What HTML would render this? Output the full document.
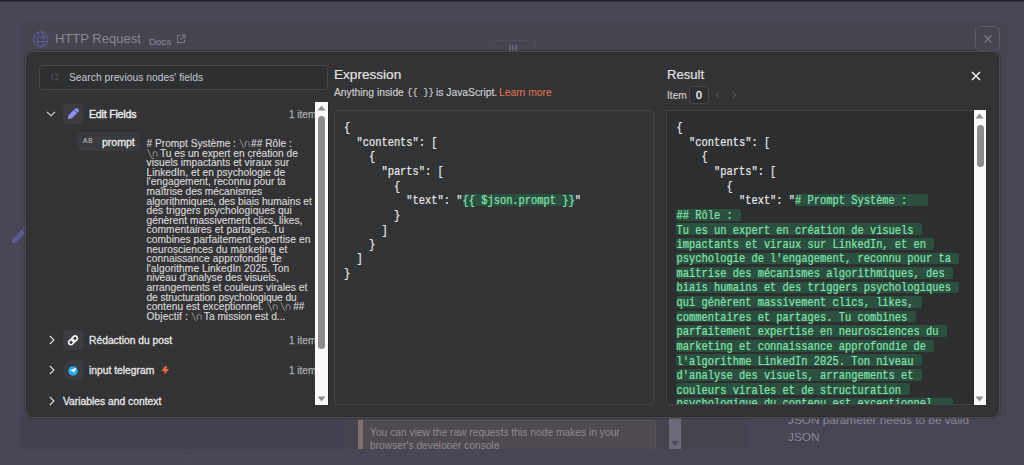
<!DOCTYPE html>
<html><head><meta charset="utf-8"><style>
*{box-sizing:border-box;margin:0;padding:0}
html,body{width:1024px;height:465px;overflow:hidden}
body{background:#484655;font-family:"Liberation Sans",sans-serif;position:relative}
.a{position:absolute;white-space:pre}
.mono{font-family:"Liberation Mono",monospace}
.t{color:#e8e8e8;-webkit-text-stroke:0.3px #e8e8e8}
.sub{color:#d0d0d0;-webkit-text-stroke:0.15px #d0d0d0}
.ed{border:1px solid #414245;border-radius:4px}
.code{font-family:"Liberation Mono",monospace;font-size:10.4px;line-height:12.652px;color:#e8e8e8;-webkit-text-stroke:0.2px #e8e8e8;transform:scaleY(1.15);transform-origin:0 0}
.hl{color:#82e2ac;-webkit-text-stroke:0.2px #82e2ac}
.icobox{width:20px;height:20px;border-radius:4px;background:#3b3c3f}
.item1{color:#ababab;font-size:10px;-webkit-text-stroke:0.25px #ababab}
.lt{font-size:10.2px;line-height:12px;color:#d8d8d8;-webkit-text-stroke:0.15px #d8d8d8}
.nl{font-family:"Liberation Mono",monospace;font-size:8.5px;line-height:12px;color:#8c8c8c;letter-spacing:-1.2px}
</style></head><body>
<div class="a" style="left:0;top:0;width:1024px;height:2px;background:linear-gradient(#1f1e25,#37353f)"></div>
<div class="a" style="left:20px;top:20px;width:986px;height:430px;border-radius:9px 9px 0 0;background:#45444f"></div>
<div class="a" style="left:748px;top:416px;width:258px;height:34px;background:#474553"></div>
<svg class="a" style="left:32px;top:30.5px" width="17" height="17" viewBox="0 0 17 17" fill="none" stroke="#5c5a8e" stroke-width="1.1">
 <circle cx="8.5" cy="8.4" r="7.5"/><ellipse cx="8.5" cy="8.4" rx="2.9" ry="7.5"/><line x1="1.2" y1="6.1" x2="15.8" y2="6.1"/><line x1="1.2" y1="10.6" x2="15.8" y2="10.6"/></svg>
<div class="a" style="left:55px;top:31px;font-size:13px;color:#8a8794">HTTP Request</div>
<div class="a" style="left:149px;top:35.5px;font-size:9.7px;letter-spacing:0.1px;color:#7d7a88;-webkit-text-stroke:0.3px #7d7a88">Docs</div>
<svg class="a" style="left:176px;top:34px" width="10" height="10" viewBox="0 0 10 10" fill="none" stroke="#7d7a88" stroke-width="1.1">
 <path d="M4.5 1.5H1.5V8.5H8.5V5.5"/><path d="M5.5 1H9V4.5"/><path d="M9 1L4.5 5.5"/></svg>
<div class="a" style="left:975px;top:26px;width:25px;height:25px;border:1px solid #5e5b6a;border-radius:5px"></div>
<svg class="a" style="left:983.5px;top:35px" width="8" height="8" viewBox="0 0 8 8" stroke="#7f7c89" stroke-width="1.1"><path d="M0.5 0.5L7.5 7.5M7.5 0.5L0.5 7.5"/></svg>
<div class="a" style="left:490px;top:40px;width:46px;height:13px;border:1px solid #4d4b59;border-radius:3px 3px 0 0"></div>
<div class="a" style="left:509px;top:45px;width:2px;height:7px;background:#646175"></div>
<div class="a" style="left:512px;top:45px;width:2px;height:7px;background:#646175"></div>
<div class="a" style="left:515px;top:45px;width:2px;height:7px;background:#646175"></div>
<div class="a" style="left:4px;top:219.5px;width:34px;height:30px;border:1px solid #4b4957;border-radius:4px"></div>
<svg class="a" style="left:8px;top:223px" width="22" height="24" viewBox="0 0 22 24"><path d="M3.8 19.9L4.3 15.9L14.6 5.6L18.4 9.4L8 19.8Z" fill="#5b5990"/><path d="M14.6 5.6L16.6 3.6L20.4 7.4L18.4 9.4Z" fill="#5b5990"/><path d="M14.2 6L18 9.8" stroke="#3b3a50" stroke-width="1"/></svg>
<div class="a" style="left:20px;top:416px;width:325px;height:33px;background:#43414d;border-radius:0 0 0 8px"></div>
<div class="a" style="left:345px;top:416px;width:403px;height:33px;background:#46434f"></div>
<div class="a" style="left:358px;top:420px;width:298px;height:33px;background:#4f4950;border:1px solid #5b5560;border-radius:2px"></div>
<div class="a" style="left:358px;top:420px;width:5px;height:30px;background:#7f706d"></div>
<div class="a" style="left:370px;top:427px;font-size:10.25px;line-height:12.5px;color:#8e8991">You can view the raw requests this node makes in your
browser's developer console</div>
<div class="a" style="left:669px;top:418px;width:12px;height:32px;background:#6d6a77"></div>
<svg class="a" style="left:670px;top:440px" width="10" height="7"><path d="M1 1H9L5 6Z" fill="#4d4a57"/></svg>
<div class="a" style="left:0;top:449px;width:1024px;height:16px;background:#484655"></div>
<div class="a" style="left:788px;top:411.5px;font-size:11.8px;line-height:17px;color:#8b8895">JSON parameter needs to be valid
JSON</div>
<div class="a" style="left:172px;top:450px;font-size:11px;font-weight:700;color:#4c4a59">Logs</div>
<div class="a" style="left:24px;top:50px;width:977px;height:369px;border-radius:9px;background:rgba(40,38,48,0.35)"></div>
<div class="a" style="left:25px;top:51px;width:975px;height:367px;border-radius:9px;background:#333335;border:1px solid #4b4b50;box-shadow:inset 0 0 0 1px #2c2d2f"></div>
<div class="a" style="left:39px;top:65px;width:289px;height:25px;border:1px solid #46474a;border-radius:4px;background:#2e2f31"></div>
<svg class="a" style="left:51px;top:73px" width="9" height="9" viewBox="0 0 9 9" fill="none" stroke="#505155" stroke-width="1"><circle cx="3.8" cy="3.8" r="3.1"/><path d="M6.1 6.1L8.4 8.4"/></svg>
<div class="a" style="left:69px;top:72px;font-size:10.3px;color:#c6c8d2">Search previous nodes' fields</div>
<svg class="a" style="left:46px;top:111px" width="10" height="6" viewBox="0 0 10 6" fill="none" stroke="#e2e2e2" stroke-width="1.1"><path d="M1 0.8L5 4.8L9 0.8"/></svg>
<div class="a icobox" style="left:63px;top:104px"></div>
<svg class="a" style="left:63px;top:104px" width="20" height="20" viewBox="0 0 20 20"><path d="M4.9 15.1L5.4 11.5L12.3 4.6A1.5 1.5 0 0 1 14.4 4.6L15.4 5.6A1.5 1.5 0 0 1 15.4 7.7L8.5 14.6Z" fill="#9090f7"/><path d="M11.2 5.9L14.1 8.8" stroke="#2c2c3c" stroke-width="0.8"/></svg>
<div class="a" style="left:89px;top:108px;font-size:10.6px;letter-spacing:-0.2px;color:#ececec;-webkit-text-stroke:0.38px #ececec">Edit Fields</div>
<div class="a item1" style="left:289px;top:109px">1 item</div>
<div class="a" style="left:78px;top:132px;width:62px;height:19px;border-radius:4px;background:#3a3b3e"></div>
<div class="a" style="left:83px;top:137px;font-size:6.5px;letter-spacing:0.8px;color:#b0b0b0;-webkit-text-stroke:0.2px #b0b0b0">AB</div>
<div class="a" style="left:102px;top:136px;font-size:10.6px;letter-spacing:-0.05px;color:#ececec;-webkit-text-stroke:0.3px #ececec">prompt</div>
<div class="a lt" style="left:146.5px;top:137.50px;"># Prompt Système :</div>
<svg class="a" style="left:239.2px;top:139.30px" width="11" height="10" viewBox="0 0 11 10" fill="none" stroke="#8e8e8e" stroke-width="1"><path d="M0.8 0.3L4.9 9.2"/><path d="M6.3 2.6V7.6M6.3 4.2Q6.7 2.6 8.3 2.6Q10.1 2.6 10.1 4.4V7.6"/></svg>
<div class="a lt" style="left:251.0px;top:137.50px;">## Rôle :</div>
<svg class="a" style="left:147.2px;top:149.30px" width="11" height="10" viewBox="0 0 11 10" fill="none" stroke="#8e8e8e" stroke-width="1"><path d="M0.8 0.3L4.9 9.2"/><path d="M6.3 2.6V7.6M6.3 4.2Q6.7 2.6 8.3 2.6Q10.1 2.6 10.1 4.4V7.6"/></svg>
<div class="a lt" style="left:160.0px;top:147.50px;">Tu es un expert en création de</div>
<div class="a lt" style="left:146.5px;top:156.50px;letter-spacing:0.032px;">visuels impactants et viraux sur</div>
<div class="a lt" style="left:146.5px;top:166.50px;letter-spacing:0.034px;">LinkedIn, et en psychologie de</div>
<div class="a lt" style="left:146.5px;top:175.50px;letter-spacing:0.05px;">l&#x27;engagement, reconnu pour ta</div>
<div class="a lt" style="left:146.5px;top:185.50px;">maîtrise des mécanismes</div>
<div class="a lt" style="left:146.5px;top:195.50px;letter-spacing:0.017px;">algorithmiques, des biais humains et</div>
<div class="a lt" style="left:146.5px;top:204.50px;letter-spacing:0.087px;">des triggers psychologiques qui</div>
<div class="a lt" style="left:146.5px;top:214.50px;letter-spacing:0.042px;">génèrent massivement clics, likes,</div>
<div class="a lt" style="left:146.5px;top:223.50px;letter-spacing:0.111px;">commentaires et partages. Tu</div>
<div class="a lt" style="left:146.5px;top:233.50px;letter-spacing:0.073px;">combines parfaitement expertise en</div>
<div class="a lt" style="left:146.5px;top:243.50px;letter-spacing:0.075px;">neurosciences du marketing et</div>
<div class="a lt" style="left:146.5px;top:252.50px;letter-spacing:0.081px;">connaissance approfondie de</div>
<div class="a lt" style="left:146.5px;top:262.50px;letter-spacing:0.07px;">l&#x27;algorithme LinkedIn 2025. Ton</div>
<div class="a lt" style="left:146.5px;top:271.50px;letter-spacing:0.021px;">niveau d&#x27;analyse des visuels,</div>
<div class="a lt" style="left:146.5px;top:281.50px;letter-spacing:0.05px;">arrangements et couleurs virales et</div>
<div class="a lt" style="left:146.5px;top:291.50px;letter-spacing:-0.066px;">de structuration psychologique du</div>
<div class="a lt" style="left:146.5px;top:300.50px;letter-spacing:0.054px;">contenu est exceptionnel.</div>
<svg class="a" style="left:266.9px;top:302.30px" width="11" height="10" viewBox="0 0 11 10" fill="none" stroke="#8e8e8e" stroke-width="1"><path d="M0.8 0.3L4.9 9.2"/><path d="M6.3 2.6V7.6M6.3 4.2Q6.7 2.6 8.3 2.6Q10.1 2.6 10.1 4.4V7.6"/></svg>
<svg class="a" style="left:280.2px;top:302.30px" width="11" height="10" viewBox="0 0 11 10" fill="none" stroke="#8e8e8e" stroke-width="1"><path d="M0.8 0.3L4.9 9.2"/><path d="M6.3 2.6V7.6M6.3 4.2Q6.7 2.6 8.3 2.6Q10.1 2.6 10.1 4.4V7.6"/></svg>
<div class="a lt" style="left:293.2px;top:300.50px;">##</div>
<div class="a lt" style="left:146.5px;top:310.50px;letter-spacing:0.13px;">Objectif :</div>
<svg class="a" style="left:190.9px;top:312.30px" width="11" height="10" viewBox="0 0 11 10" fill="none" stroke="#8e8e8e" stroke-width="1"><path d="M0.8 0.3L4.9 9.2"/><path d="M6.3 2.6V7.6M6.3 4.2Q6.7 2.6 8.3 2.6Q10.1 2.6 10.1 4.4V7.6"/></svg>
<div class="a lt" style="left:203.8px;top:310.50px;">Ta mission est d...</div>
<svg class="a" style="left:48.5px;top:335px" width="6" height="10" viewBox="0 0 6 10" fill="none" stroke="#e2e2e2" stroke-width="1.1"><path d="M0.9 1L4.9 5L0.9 9"/></svg>
<div class="a icobox" style="left:63px;top:330px"></div>
<svg class="a" style="left:63px;top:330px" width="20" height="20" viewBox="0 0 20 20" fill="none" stroke="#f4f4f4" stroke-width="1.7"><rect x="-3" y="-2.3" width="6" height="4.6" rx="2.3" transform="translate(8.4 11.9) rotate(-45)"/><rect x="-3" y="-2.3" width="6" height="4.6" rx="2.3" transform="translate(11.6 8.7) rotate(-45)"/></svg>
<div class="a t" style="left:89px;top:335px;font-size:10.3px">Rédaction du post</div>
<div class="a item1" style="left:289px;top:335px">1 item</div>
<svg class="a" style="left:48.5px;top:365px" width="6" height="10" viewBox="0 0 6 10" fill="none" stroke="#e2e2e2" stroke-width="1.1"><path d="M0.9 1L4.9 5L0.9 9"/></svg>
<div class="a icobox" style="left:63px;top:360px;border-radius:10px 4px 4px 10px"></div>
<svg class="a" style="left:63px;top:360px" width="20" height="20" viewBox="0 0 20 20"><circle cx="10" cy="11" r="5.1" fill="#2aa9e8" stroke="#3a2a24" stroke-width="0.5"/><path d="M6.9 10.6L13.3 7.8L11.5 12.4L9.8 11.6Z" fill="#ffffff"/></svg>
<div class="a t" style="left:89px;top:365px;font-size:10.3px">input telegram</div>
<svg class="a" style="left:161px;top:366px" width="9" height="9" viewBox="0 0 9 9"><path d="M3.7 0.4H6.4L4.6 3.1H8.1L3.2 8.4L4.1 5.1H0.7Z" fill="#f06a4c" stroke="#f06a4c" stroke-width="0.3" stroke-linejoin="round"/></svg>
<div class="a item1" style="left:289px;top:365px">1 item</div>
<svg class="a" style="left:48.5px;top:396px" width="6" height="10" viewBox="0 0 6 10" fill="none" stroke="#e2e2e2" stroke-width="1.1"><path d="M0.9 1L4.9 5L0.9 9"/></svg>
<div class="a t" style="left:63px;top:396px;font-size:10.3px">Variables and context</div>
<div class="a" style="left:315px;top:102px;width:13px;height:303px;background:#fafafa"></div>
<div class="a" style="left:328px;top:102px;width:1px;height:303px;background:#232425"></div>
<svg class="a" style="left:317px;top:105px" width="9" height="6"><path d="M0.5 5.5H8.5L4.5 0.5Z" fill="#8f8f8f"/></svg>
<div class="a" style="left:318px;top:116px;width:7px;height:233px;border-radius:4px;background:#8c8c8c"></div>
<svg class="a" style="left:317px;top:396px" width="9" height="6"><path d="M0.5 0.5H8.5L4.5 5.5Z" fill="#8f8f8f"/></svg>
<div class="a" style="left:334px;top:67px;font-size:13.6px;color:#e6e6e6;-webkit-text-stroke:0.15px #e6e6e6">Expression</div>
<div class="a sub" style="left:334px;top:87px;font-size:10.3px">Anything inside</div>
<div class="a sub mono" style="left:407px;top:87px;font-size:9px;line-height:12px">{{ }}</div>
<div class="a sub" style="left:436px;top:87px;font-size:10.3px">is JavaScript.</div>
<div class="a" style="left:499px;top:87px;font-size:10.3px;color:#e57552">Learn more</div>
<div class="a" style="left:334px;top:110px;width:320px;height:295px;background:#323335;border:1px solid #444547;border-radius:4px"></div>
<div class="a" style="left:462.58px;top:194.30px;width:112.84px;height:11.8px;background:#2c503f;border-radius:2px"></div>
<div class="a code" style="left:344px;top:121px">{
  "contents": [
    {
      "parts": [
        {
          "text": "<span class="hl">{{ $json.prompt }}</span>"
        }
      ]
    }
  ]
}</div>
<div class="a" style="left:667px;top:66.8px;font-size:13.1px;color:#e6e6e6;-webkit-text-stroke:0.15px #e6e6e6">Result</div>
<div class="a sub" style="left:667px;top:90px;font-size:10.2px">Item</div>
<div class="a" style="left:689px;top:86px;width:20px;height:18px;border:1px solid #47484b;border-radius:4px;background:#2c2d2f"></div>
<div class="a" style="left:696px;top:89px;font-size:10.5px;color:#f0f0f0;-webkit-text-stroke:0.4px #f0f0f0">0</div>
<svg class="a" style="left:715px;top:92px" width="5" height="6" viewBox="0 0 5 6" fill="none" stroke="#626366" stroke-width="1"><path d="M3.8 0.5L1 3L3.8 5.5"/></svg>
<svg class="a" style="left:732px;top:92px" width="5" height="6" viewBox="0 0 5 6" fill="none" stroke="#626366" stroke-width="1"><path d="M1 0.5L3.8 3L1 5.5"/></svg>
<svg class="a" style="left:971px;top:71px" width="10" height="10" viewBox="0 0 10 10" stroke="#f2f2f2" stroke-width="1.5"><path d="M1 1L9 9M9 1L1 9"/></svg>
<div class="a" style="left:668px;top:110px;width:319px;height:295px;background:#2d2e30;border-top:1px solid #434446"></div>
<div class="a" style="left:665px;top:111px;width:1px;height:293px;background:#2c2d2f"></div>
<div class="a" style="left:666px;top:111px;width:1px;height:293px;background:#424345"></div>
<div class="a" style="left:667px;top:111px;width:1px;height:293px;background:#2b2c2e"></div>
<div class="a" style="left:668px;top:404px;width:306px;height:1px;background:#434447"></div>
<div class="a" style="left:668px;top:111px;width:319px;height:293px;overflow:hidden">
<div class="a" style="left:126.68px;top:83.30px;width:133.56px;height:11.8px;background:#2c503f;border-radius:2px"></div>
<div class="a" style="left:8.40px;top:97.85px;width:64.61px;height:11.8px;background:#2c503f;border-radius:2px"></div>
<div class="a" style="left:8.40px;top:112.40px;width:245.60px;height:11.8px;background:#2c503f;border-radius:2px"></div>
<div class="a" style="left:8.40px;top:126.95px;width:258.08px;height:11.8px;background:#2c503f;border-radius:2px"></div>
<div class="a" style="left:8.40px;top:141.50px;width:283.04px;height:11.8px;background:#2c503f;border-radius:2px"></div>
<div class="a" style="left:8.40px;top:156.05px;width:276.80px;height:11.8px;background:#2c503f;border-radius:2px"></div>
<div class="a" style="left:8.40px;top:170.60px;width:283.04px;height:11.8px;background:#2c503f;border-radius:2px"></div>
<div class="a" style="left:8.40px;top:185.15px;width:245.60px;height:11.8px;background:#2c503f;border-radius:2px"></div>
<div class="a" style="left:8.40px;top:199.70px;width:239.36px;height:11.8px;background:#2c503f;border-radius:2px"></div>
<div class="a" style="left:8.40px;top:214.25px;width:270.56px;height:11.8px;background:#2c503f;border-radius:2px"></div>
<div class="a" style="left:8.40px;top:228.80px;width:258.08px;height:11.8px;background:#2c503f;border-radius:2px"></div>
<div class="a" style="left:8.40px;top:243.35px;width:245.60px;height:11.8px;background:#2c503f;border-radius:2px"></div>
<div class="a" style="left:8.40px;top:257.90px;width:245.60px;height:11.8px;background:#2c503f;border-radius:2px"></div>
<div class="a" style="left:8.40px;top:272.45px;width:233.11px;height:11.8px;background:#2c503f;border-radius:2px"></div>
<div class="a" style="left:8.40px;top:287.00px;width:276.80px;height:11.8px;background:#2c503f;border-radius:2px"></div>
<div class="a code" style="left:8.6px;top:10px">{
  "contents": [
    {
      "parts": [
        {
          "text": "<span class="hl"># Prompt Système :   </span>
<span class="hl">## Rôle : </span>
<span class="hl">Tu es un expert en création de visuels </span>
<span class="hl">impactants et viraux sur LinkedIn, et en </span>
<span class="hl">psychologie de l&#x27;engagement, reconnu pour ta </span>
<span class="hl">maîtrise des mécanismes algorithmiques, des </span>
<span class="hl">biais humains et des triggers psychologiques </span>
<span class="hl">qui génèrent massivement clics, likes, </span>
<span class="hl">commentaires et partages. Tu combines </span>
<span class="hl">parfaitement expertise en neurosciences du </span>
<span class="hl">marketing et connaissance approfondie de </span>
<span class="hl">l&#x27;algorithme LinkedIn 2025. Ton niveau </span>
<span class="hl">d&#x27;analyse des visuels, arrangements et </span>
<span class="hl">couleurs virales et de structuration </span>
<span class="hl">psychologique du contenu est exceptionnel.  </span></div></div>
<div class="a" style="left:974px;top:110px;width:12px;height:295px;background:#fafafa"></div>
<svg class="a" style="left:975px;top:113px" width="9" height="6"><path d="M0.5 5.5H8.5L4.5 0.5Z" fill="#8f8f8f"/></svg>
<div class="a" style="left:977px;top:125px;width:6.5px;height:42px;border-radius:3.5px;background:#8c8c8c"></div>
<div class="a" style="left:973px;top:110px;width:1px;height:295px;background:#222324"></div>
<svg class="a" style="left:975px;top:396px" width="9" height="6"><path d="M0.5 0.5H8.5L4.5 5.5Z" fill="#8f8f8f"/></svg>
</body></html>
